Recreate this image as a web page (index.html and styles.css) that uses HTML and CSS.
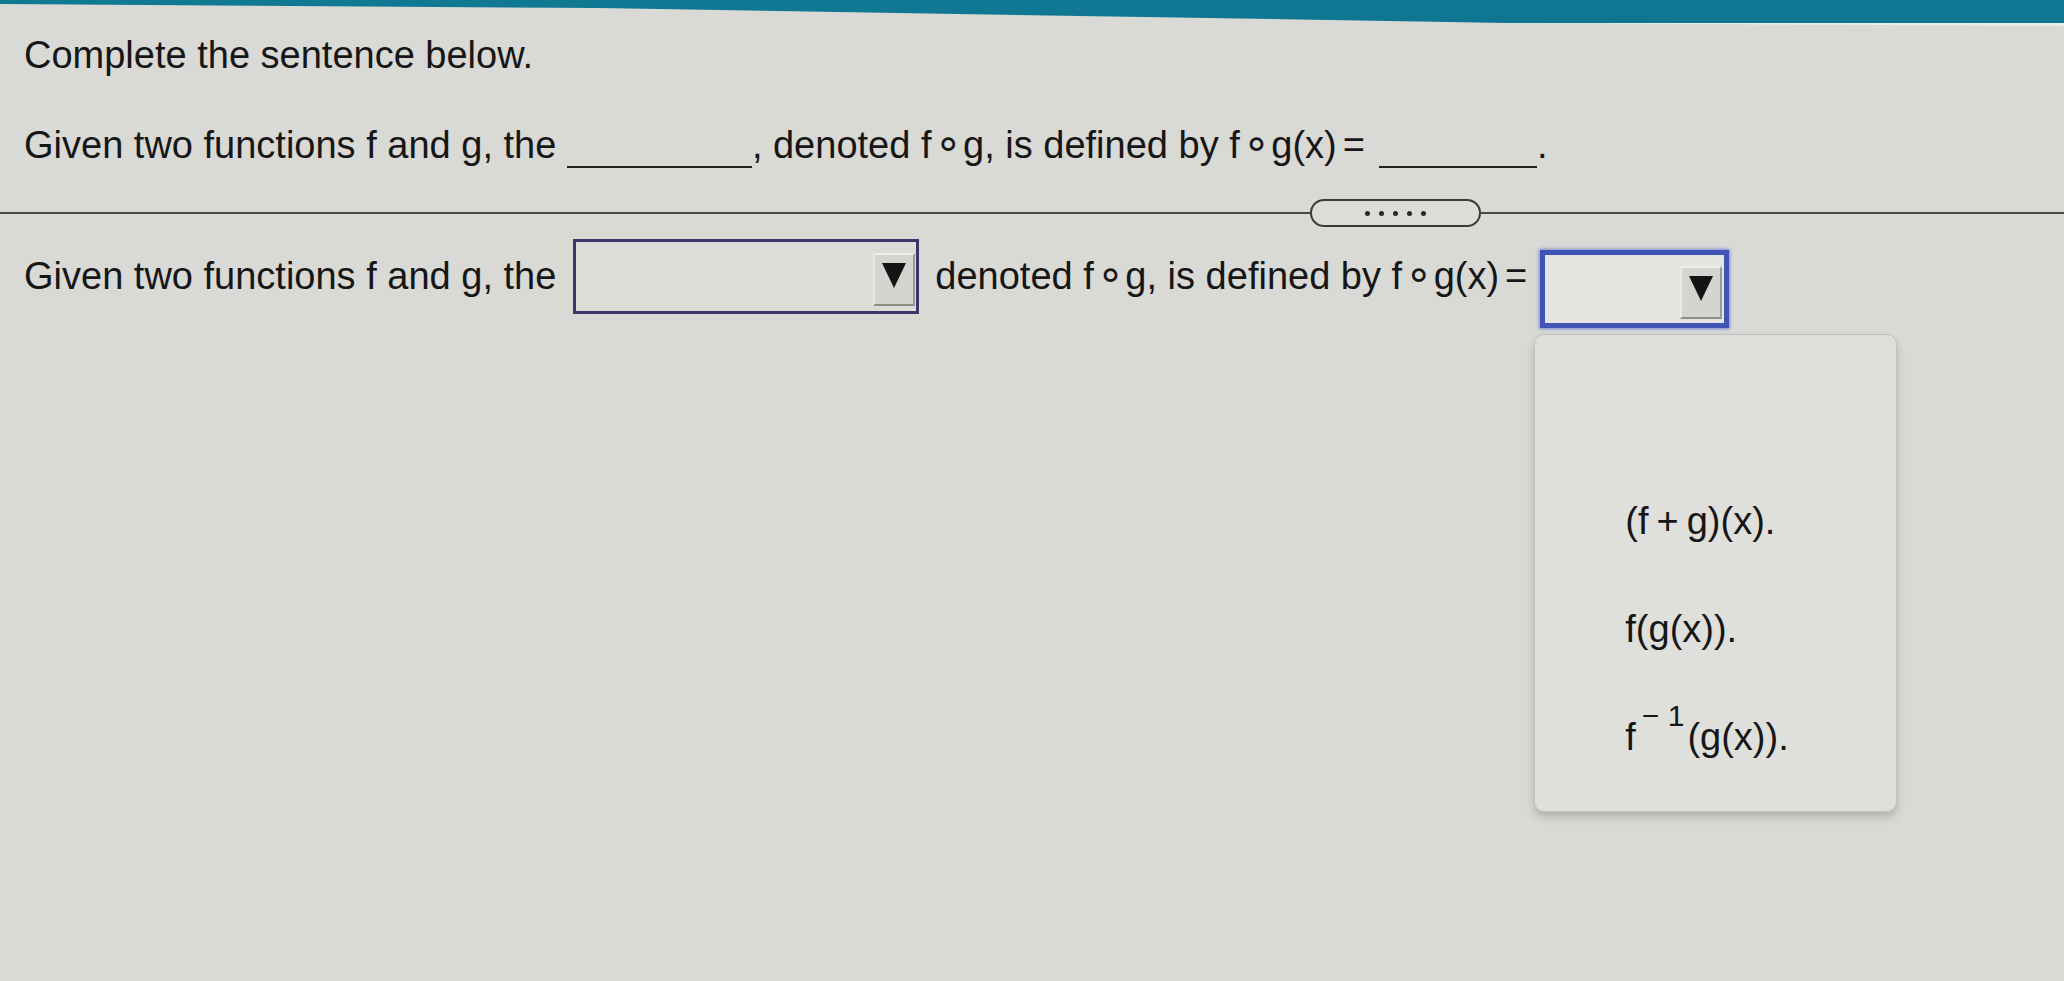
FILE: index.html
```html
<!DOCTYPE html>
<html lang="en">
<head>
<meta charset="utf-8">
<title>Complete the sentence</title>
<link rel="stylesheet" href="styles.css">
</head>
<body>
<div class="topbar"></div>
<main class="content">
  <p class="prompt">Complete the sentence below.</p>
  <p class="sentence">Given two functions f and g, the <span class="blank blank-a"></span>, denoted f<span class="comp">∘</span>g, is defined by f<span class="comp">∘</span>g(x)<span class="eq">=</span><span class="blank blank-b"></span>.</p>
  <div class="divider">
    <span class="rule rule-left"></span>
    <span class="pill"><i></i><i></i><i></i><i></i><i></i></span>
    <span class="rule"></span>
  </div>
  <div class="answer">
    <span class="txt">Given two functions f and g, the</span>
    <span class="select select-a"><span class="btn"><span class="tri"></span></span></span>
    <span class="txt">denoted f<span class="comp">∘</span>g, is defined by f<span class="comp">∘</span>g(x)<span class="eq">=</span></span>
    <span class="select select-b"><span class="btn"><span class="tri"></span></span>
      <span class="menu">
        <span class="opt">(f<span class="op">+</span>g)(x).</span>
        <span class="opt">f(g(x)).</span>
        <span class="opt">f<sup class="inv">− 1</sup>(g(x)).</span>
      </span>
    </span>
  </div>
</main>
</body>
</html>
```
FILE: styles.css
```css
html, body {
  margin: 0;
  padding: 0;
}
body {
  width: 2064px;
  height: 981px;
  overflow: hidden;
  background: #d9d9d5;
  color: #161616;
  font-family: "Liberation Sans", Arial, sans-serif;
}
.topbar {
  height: 26px;
  background: linear-gradient(to bottom, #117a93 0, #0f7591 88%, #ecece9 88%, #ecece9 100%);
  clip-path: polygon(0 0, 100% 0, 100% 26px, 73% 23px, 29% 8px, 0 4px);
}
.content {
  padding-left: 24px;
  position: relative;
}
.prompt {
  margin: 7px 0 0;
  font-size: 38px;
  line-height: 44px;
}
.sentence {
  margin: 46px 0 0;
  font-size: 38px;
  line-height: 44px;
  white-space: nowrap;
}
.comp {
  display: inline-block;
  font-family: "DejaVu Sans", sans-serif;
  font-size: 44px;
  line-height: 30px;
  margin: 0 1px 0 3px;
}
.eq {
  margin-left: 6px;
}
.blank {
  display: inline-block;
  border-bottom: 2px solid #222;
  vertical-align: -10px;
}
.blank-a {
  width: 185px;
}
.blank-b {
  width: 158px;
  margin-left: 14px;
}
.divider {
  display: flex;
  align-items: center;
  margin: 31px 0 0 -24px;
  height: 28px;
}
.rule {
  flex: 1;
  height: 2px;
  background: #4a4a4a;
}
.rule-left {
  flex: 0 0 1310px;
}
.pill {
  width: 171px;
  height: 28px;
  box-sizing: border-box;
  border: 2px solid #3a3a3a;
  border-radius: 14px;
  background: #dcdcd8;
  display: flex;
  align-items: center;
  justify-content: center;
  gap: 9px;
}
.pill i {
  width: 5px;
  height: 5px;
  border-radius: 50%;
  background: #2a2a2a;
}
.answer {
  display: flex;
  align-items: flex-start;
  margin-top: 12px;
  font-size: 38px;
  line-height: 44px;
  white-space: nowrap;
}
.answer .txt {
  margin-top: 15px;
}
.answer .txt:nth-of-type(2) {
  margin-top: 24px;
}
.select {
  display: flex;
  justify-content: flex-end;
  box-sizing: border-box;
  position: relative;
}
.select-a {
  width: 346px;
  height: 75px;
  margin: 0 16px 0 17px;
  border: 3px solid #3a3868;
  background: #dcdcd9;
  padding: 11px 1px 5px 0;
}
.select-b {
  width: 189px;
  height: 78px;
  margin-left: 13px;
  margin-top: 11px;
  border: 5px solid #4054b6;
  box-shadow: 0 0 3px 1px #7a8ad0;
  background: #e4e4e1;
  padding: 11px 2px 4px 0;
}
.btn {
  width: 42px;
  box-sizing: border-box;
  background: #d4d4d1;
  border: 2px solid;
  border-color: #eeeeec #9a9a97 #8c8c89 #e8e8e6;
  display: flex;
  justify-content: center;
  align-items: flex-start;
  padding-top: 8px;
}
.tri {
  width: 0;
  height: 0;
  border-left: 12px solid transparent;
  border-right: 12px solid transparent;
  border-top: 25px solid #141414;
}
.menu {
  position: absolute;
  top: 79px;
  left: -11px;
  width: 363px;
  height: 478px;
  box-sizing: border-box;
  background: #dfdfdb;
  border: 1px solid #c2c2bd;
  border-radius: 10px;
  box-shadow: 0 5px 9px rgba(0, 0, 0, 0.18);
  display: flex;
  flex-direction: column;
  padding: 132px 0 0 90px;
}
.opt {
  height: 108px;
  display: flex;
  align-items: center;
  font-size: 38px;
  line-height: 40px;
  color: #161616;
}
.op {
  margin: 0 8px;
}
.inv {
  font-size: 30px;
  line-height: 1;
  align-self: flex-start;
  margin: 18px 3px 0 6px;
}
```
